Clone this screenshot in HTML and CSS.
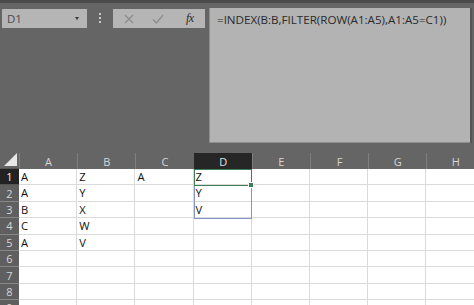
FILE: index.html
```html
<!DOCTYPE html>
<html>
<head>
<meta charset="utf-8">
<link rel="stylesheet" href="styles.css">
</head>
<body>
<div class="app">
  <div class="top">
    <div class="namebox"><span class="ref">D1</span><span class="caret"></span></div>
    <div class="dots"><i></i><i></i><i></i></div>
    <div class="fxbox">
      <svg class="ico-x" width="10" height="10" viewBox="0 0 10 10"><path d="M1 1L9 9M9 1L1 9" stroke="#8c8c8c" stroke-width="1.2" fill="none"/></svg>
      <svg class="ico-check" width="12" height="10" viewBox="0 0 12 10"><path d="M1 5.5L4.5 9L11 1" stroke="#8c8c8c" stroke-width="1.3" fill="none"/></svg>
      <span class="fx">fx</span>
    </div>
    <div class="formula">=INDEX(B:B,FILTER(ROW(A1:A5),A1:A5=C1))</div>
    <div class="edge"></div>
  </div>
  <div class="sheet">
    <div class="grid">
      <div class="corner"><span class="tri"></span></div>
      <div class="ch">A</div><div class="ch">B</div><div class="ch">C</div><div class="ch sel">D</div><div class="ch">E</div><div class="ch">F</div><div class="ch">G</div><div class="ch">H</div>

      <div class="rh sel">1</div><div class="c">A</div><div class="c">Z</div><div class="c">A</div><div class="c">Z</div><div class="c"></div><div class="c"></div><div class="c"></div><div class="c"></div>
      <div class="rh">2</div><div class="c">A</div><div class="c">Y</div><div class="c"></div><div class="c">Y</div><div class="c"></div><div class="c"></div><div class="c"></div><div class="c"></div>
      <div class="rh">3</div><div class="c">B</div><div class="c">X</div><div class="c"></div><div class="c">V</div><div class="c"></div><div class="c"></div><div class="c"></div><div class="c"></div>
      <div class="rh">4</div><div class="c">C</div><div class="c">W</div><div class="c"></div><div class="c"></div><div class="c"></div><div class="c"></div><div class="c"></div><div class="c"></div>
      <div class="rh">5</div><div class="c">A</div><div class="c">V</div><div class="c"></div><div class="c"></div><div class="c"></div><div class="c"></div><div class="c"></div><div class="c"></div>
      <div class="rh">6</div><div class="c"></div><div class="c"></div><div class="c"></div><div class="c"></div><div class="c"></div><div class="c"></div><div class="c"></div><div class="c"></div>
      <div class="rh">7</div><div class="c"></div><div class="c"></div><div class="c"></div><div class="c"></div><div class="c"></div><div class="c"></div><div class="c"></div><div class="c"></div>
      <div class="rh">8</div><div class="c"></div><div class="c"></div><div class="c"></div><div class="c"></div><div class="c"></div><div class="c"></div><div class="c"></div><div class="c"></div>
      <div class="rh">9</div><div class="c"></div><div class="c"></div><div class="c"></div><div class="c"></div><div class="c"></div><div class="c"></div><div class="c"></div><div class="c"></div>
    </div>
    <div class="spill"></div>
    <div class="active"><span class="handle"></span></div>
  </div>
</div>
</body>
</html>
```
FILE: styles.css
```css
html, body {
  margin: 0;
  padding: 0;
}
body {
  width: 474px;
  height: 305px;
  overflow: hidden;
  background: #656565;
  font-family: "Open Sans", "Noto Sans", sans-serif;
}
.app {
  width: 474px;
  height: 305px;
  background: #656565;
  border-top: 3px solid #4b4b4b;
  box-sizing: border-box;
}
.top {
  display: flex;
  align-items: flex-start;
  padding-top: 5px;
  height: 135px;
}
.namebox {
  margin-left: 2px;
  margin-top: 1px;
  width: 85px;
  height: 19px;
  background: #b5b5b5;
  display: flex;
  align-items: center;
  justify-content: space-between;
  box-sizing: border-box;
  padding: 0 8px 0 5px;
  color: #4a4a4a;
  font-size: 11.5px;
}
.caret {
  width: 0;
  height: 0;
  border-left: 2.5px solid transparent;
  border-right: 2.5px solid transparent;
  border-top: 3px solid #3a3a3a;
}
.dots {
  margin-left: 12px;
  margin-top: 5px;
  display: flex;
  flex-direction: column;
  gap: 2px;
}
.dots i {
  display: block;
  width: 2px;
  height: 2px;
  background: #c9c9c9;
}
.fxbox {
  margin-left: 12px;
  margin-top: 1px;
  width: 92px;
  height: 19px;
  background: #b5b5b5;
  display: flex;
  align-items: center;
  box-sizing: border-box;
  padding-left: 11px;
}
.ico-x {
  margin-right: 18px;
}
.ico-check {
  margin-right: 22px;
}
.fx {
  font-family: "Liberation Serif", "DejaVu Serif", serif;
  font-style: italic;
  font-size: 12px;
  color: #2c2c2c;
  letter-spacing: -0.5px;
}
.formula {
  margin-left: 4px;
  width: 261px;
  height: 135px;
  background: #b3b3b3;
  box-sizing: border-box;
  border-left: 1px solid #8e8e8e;
  border-bottom: 1px solid #8e8e8e;
  padding: 4px 0 0 7px;
  font-size: 11.6px;
  color: #2a2a2a;
  line-height: 16px;
  white-space: nowrap;
}
.edge {
  width: 2px;
  height: 135px;
  background: #555;
}
.sheet {
  position: relative;
  margin-top: 10px;
  overflow: hidden;
  height: 152px;
}
.grid {
  display: grid;
  grid-template-columns: 19px repeat(8, 58.2px);
  grid-template-rows: 16px repeat(9, 16.4px);
  width: 500px;
}
.corner {
  position: relative;
  background: #656565;
  border-bottom: 1px solid #555;
}
.tri {
  position: absolute;
  right: 2px;
  bottom: 2px;
  width: 0;
  height: 0;
  border-left: 13px solid transparent;
  border-bottom: 13px solid #e8e8e8;
}
.ch {
  background: #656565;
  color: #d6d6d6;
  font-size: 11px;
  display: flex;
  align-items: center;
  justify-content: center;
  border-left: 1px solid #7e7e7e;
  box-sizing: border-box;
}
.ch.sel {
  background: #262626;
  color: #e0e0e0;
  border-left-color: #262626;
}
.rh {
  background: #5f5f5f;
  color: #d6d6d6;
  font-size: 11px;
  display: flex;
  align-items: center;
  justify-content: center;
  border-bottom: 1px solid #878787;
  box-sizing: border-box;
}
.rh.sel {
  background: #222;
  color: #f0f0f0;
  border-bottom-color: #555;
}
.c {
  background: #fff;
  border-right: 1px solid #dadada;
  border-bottom: 1px solid #dadada;
  box-sizing: border-box;
  font-size: 11.2px;
  color: #111;
  padding-left: 2px;
  line-height: 16px;
}
.spill {
  position: absolute;
  left: 193.6px;
  top: 16px;
  width: 58.6px;
  height: 49.6px;
  border: 1px solid #8494c4;
  box-sizing: border-box;
}
.active {
  position: absolute;
  left: 193.6px;
  top: 15.5px;
  width: 58.6px;
  height: 17.2px;
  border: 1.5px solid #3d7d58;
  box-sizing: border-box;
}
.handle {
  position: absolute;
  right: -3px;
  bottom: -3px;
  width: 4px;
  height: 4px;
  background: #3d7d58;
  border: 1px solid #fff;
}
```
